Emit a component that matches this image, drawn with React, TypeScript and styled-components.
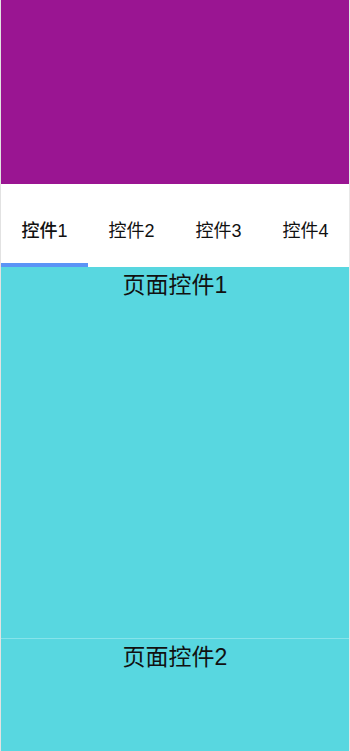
import React, { useState } from "react"
import styled, { createGlobalStyle } from "styled-components"

const Global = createGlobalStyle`
  body {
    margin: 0;
    font-family: "Liberation Sans", "Noto Sans CJK SC", sans-serif;
    background: #fff;
  }
`

const Screen = styled.div`
  width: 350px;
  height: 751px;
  overflow: hidden;
  border-left: 1px solid #e2e2e2;
  border-right: 1px solid #e8e8e8;
  box-sizing: border-box;
`

const Banner = styled.div`
  height: 184px;
  background: #9a1592;
`

const TabBar = styled.div`
  height: 83px;
  display: flex;
  background: #fff;
`

const Tab = styled.div<{ $active: boolean }>`
  flex: 1;
  display: flex;
  align-items: center;
  justify-content: center;
  padding-top: 10px;
  box-sizing: border-box;
  font-size: 18px;
  color: #111;
  font-weight: ${(p) => (p.$active ? 500 : 400)};
  border-bottom: 4px solid ${(p) => (p.$active ? "#5b94f6" : "transparent")};
  cursor: pointer;
`

const Page = styled.div<{ $h: number }>`
  height: ${(p) => p.$h}px;
  background: #58d7e0;
  border-bottom: 1px solid #86e3ea;
  text-align: center;
  font-size: 23px;
  line-height: 36px;
  color: #111;
`

const tabs = ["控件1", "控件2", "控件3", "控件4"]

const App = () => {
  const [active, setActive] = useState(0)
  return (
    <Screen>
      <Global />
      <Banner />
      <TabBar>
        {tabs.map((t, i) => (
          <Tab key={t} $active={i === active} onClick={() => setActive(i)}>
            {t}
          </Tab>
        ))}
      </TabBar>
      <Page $h={371}>页面控件1</Page>
      <Page $h={371}>页面控件2</Page>
    </Screen>
  )
}

export default App
